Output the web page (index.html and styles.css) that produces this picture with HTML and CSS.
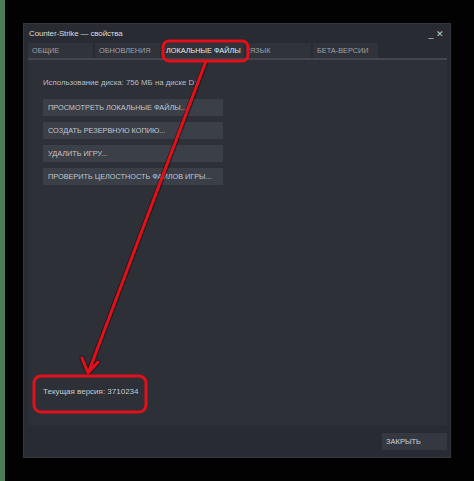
FILE: index.html
```html
<!DOCTYPE html>
<html lang="ru">
<head>
<meta charset="utf-8">
<link rel="stylesheet" href="styles.css">
</head>
<body>
<div class="page">
  <div class="strip"></div>
  <div class="stage">
    <div class="window">
      <div class="titlebar">
        <span class="title">Counter-Strike — свойства</span>
        <span class="controls">_ ✕</span>
      </div>
      <div class="tabs">
        <div class="tab">ОБЩИЕ</div>
        <div class="tab">ОБНОВЛЕНИЯ</div>
        <div class="tab active">ЛОКАЛЬНЫЕ ФАЙЛЫ</div>
        <div class="tab">ЯЗЫК</div>
        <div class="tab">БЕТА-ВЕРСИИ</div>
      </div>
      <div class="panel">
        <div class="disk">Использование диска: 756 МБ на диске D:</div>
        <div class="buttons">
          <div class="btn">ПРОСМОТРЕТЬ ЛОКАЛЬНЫЕ ФАЙЛЫ...</div>
          <div class="btn">СОЗДАТЬ РЕЗЕРВНУЮ КОПИЮ...</div>
          <div class="btn">УДАЛИТЬ ИГРУ...</div>
          <div class="btn">ПРОВЕРИТЬ ЦЕЛОСТНОСТЬ ФАЙЛОВ ИГРЫ...</div>
        </div>
        <div class="spacer"></div>
        <div class="version">Текущая версия: 3710234</div>
      </div>
      <div class="footer">
        <div class="close">ЗАКРЫТЬ</div>
      </div>
    </div>
  </div>
  <svg class="annot" width="474" height="481" viewBox="0 0 474 481">
    <g fill="none" stroke="#1a0a0a" stroke-opacity="0.55" stroke-width="5" stroke-linecap="round" stroke-linejoin="round">
      <line x1="206" y1="62" x2="89" y2="371"/>
      <polyline points="82,358 88,373 98,362"/>
    </g>
    <g fill="none" stroke="#e3101c" stroke-width="3" stroke-linecap="round" stroke-linejoin="round">
      <rect x="163" y="41" width="85" height="20" rx="6"/>
      <rect x="34" y="376" width="112" height="36" rx="7"/>
      <line x1="206" y1="61" x2="89" y2="371"/>
      <polyline points="82,358 88,373 98,362"/>
    </g>
  </svg>
</div>
</body>
</html>
```

FILE: styles.css
```css
html, body {
  margin: 0;
  padding: 0;
  background: #000;
}
.page {
  position: relative;
  width: 474px;
  height: 481px;
  display: flex;
  background: #020202;
  font-family: "Liberation Sans", Arial, sans-serif;
  overflow: hidden;
}
.strip {
  width: 5px;
  background: #4b7d57;
}
.stage {
  flex: 1;
  padding: 23px 0 0 18px;
}
.window {
  width: 428px;
  height: 435px;
  box-sizing: border-box;
  background: #282b31;
  border: 1px solid #34373d;
  display: flex;
  flex-direction: column;
  padding: 0 3px 0 4px;
}
.titlebar {
  height: 19px;
  display: flex;
  align-items: center;
  justify-content: space-between;
  padding: 0 3px 0 1px;
}
.title {
  color: #d8dadc;
  font-size: 8px;
  letter-spacing: -0.15px;
}
.controls {
  color: #c9ccd0;
  font-size: 9px;
}
.tabs {
  display: flex;
  gap: 2px;
  height: 15px;
  border-bottom: 2px solid #43464c;
}
.tab {
  width: 65px;
  box-sizing: border-box;
  padding: 0 4px;
  background: #30333a;
  color: #9ea2a8;
  font-size: 7.3px;
  line-height: 15px;
  white-space: nowrap;
}
.tab.active {
  width: 82px;
  background: #30333a;
  color: #e9ebed;
}
.panel {
  flex: 1;
  background: #2d3037;
  display: flex;
  flex-direction: column;
  padding: 18px 0 0 15px;
}
.disk {
  color: #b9bcc1;
  font-size: 7.8px;
  line-height: 10px;
}
.buttons {
  margin-top: 11px;
  display: flex;
  flex-direction: column;
  gap: 6px;
}
.btn {
  width: 180px;
  height: 17px;
  box-sizing: border-box;
  padding-left: 5px;
  background: #3b3f47;
  color: #c3c6cb;
  font-size: 7.3px;
  line-height: 17px;
  white-space: nowrap;
}
.spacer {
  flex: 1;
}
.version {
  color: #c7cacf;
  font-size: 8px;
  line-height: 10px;
  margin-bottom: 28px;
}
.footer {
  height: 32px;
  display: flex;
  justify-content: flex-end;
  align-items: flex-start;
  padding-top: 8px;
  box-sizing: border-box;
}
.close {
  width: 65px;
  height: 17px;
  box-sizing: border-box;
  padding-left: 4px;
  background: #353840;
  color: #d0d3d7;
  font-size: 7.5px;
  line-height: 17px;
}
.annot {
  position: absolute;
  left: 0;
  top: 0;
  pointer-events: none;
}
```
